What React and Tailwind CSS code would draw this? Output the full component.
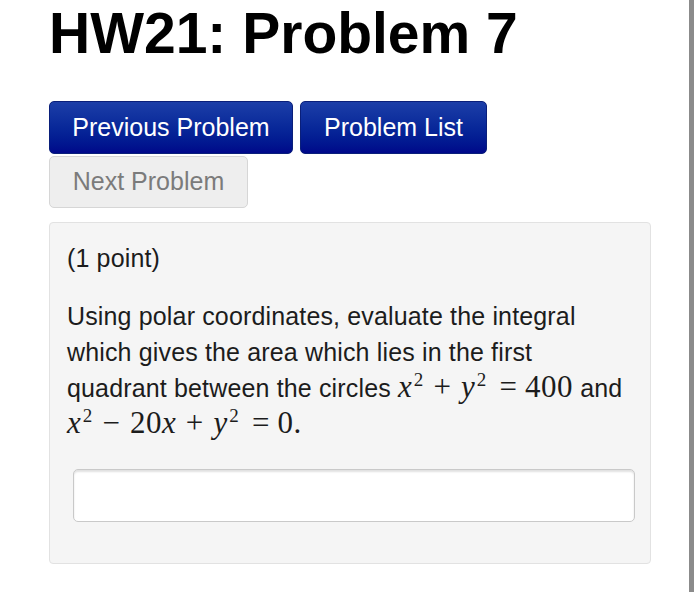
import React from 'react';

// MathJax-ish inline math pieces
const Var = ({ children }) => <i className="font-['Liberation_Serif',serif] text-[31px] leading-none tracking-normal">{children}</i>;
const Num = ({ children }) => <span className="font-['Liberation_Serif',serif] text-[31px] leading-none tracking-[0.5px]">{children}</span>;
const Sq = () => <span className="font-['Liberation_Serif',serif] text-[19px] leading-none relative -top-[11px] ml-[2px]">2</span>;
const Bin = ({ children }) => <span className="font-['Liberation_Serif',serif] text-[31px] leading-none mx-[10px]">{children}</span>;
const Eq = () => <span className="font-['Liberation_Serif',serif] text-[31px] leading-none ml-[13px] mr-[8px]">=</span>;

export default function App() {
    return (
        <div className="flex h-[592px] w-[700px] bg-white font-['Liberation_Sans',Arial,sans-serif] overflow-hidden">
            <div className="flex-1 pl-[49px]">
                <h1 className="mt-[5px] text-[57px] font-bold leading-[57px] text-black">HW21: Problem 7</h1>

                <div className="mt-[39px] flex gap-[7px]">
                    <button className="w-[244px] h-[53px] rounded-[5px] border border-[#0a1f7a] bg-linear-to-b from-[#1c3ea8] to-[#00078a] text-white text-[25px] flex items-center justify-center">
                        Previous Problem
                    </button>
                    <button className="w-[187px] h-[53px] rounded-[5px] border border-[#0a1f7a] bg-linear-to-b from-[#1c3ea8] to-[#00078a] text-white text-[25px] flex items-center justify-center">
                        Problem List
                    </button>
                </div>
                <div className="mt-[2px]">
                    <button className="w-[199px] h-[52px] rounded-[5px] border border-[#d6d6d6] bg-[#eeeeee] text-[#7b7b7b] text-[25px] flex items-center justify-center">
                        Next Problem
                    </button>
                </div>

                <div className="mt-[14px] w-[602px] h-[342px] rounded-[4px] border border-[#e2e2e2] bg-[#f5f5f5] pl-[17px] pt-[17px] text-[25px] tracking-[0.15px] leading-[36px] text-[#1c1c1c]">
                    <p>(1 point)</p>
                    <p className="mt-[22px]">
                        Using polar coordinates, evaluate the integral<br />
                        which gives the area which lies in the first<br />
                        quadrant between the circles{' '}
                        <Var>x</Var><Sq /><Bin>+</Bin><Var>y</Var><Sq /><Eq /><Num>400</Num> and<br />
                        <Var>x</Var><Sq /><Bin>−</Bin><Num>20</Num><Var>x</Var><Bin>+</Bin><Var>y</Var><Sq /><Eq /><Num>0.</Num>
                    </p>
                    <div className="mt-[27px] ml-[6px] w-[562px] h-[53px] rounded-[5px] border border-[#c9c9c9] bg-white shadow-[inset_0_2px_2px_rgba(0,0,0,0.12)]" />
                </div>
            </div>
            <div className="w-[5px] bg-[#8b8b8b]" />
            <div className="w-[6px]" />
        </div>
    );
}
